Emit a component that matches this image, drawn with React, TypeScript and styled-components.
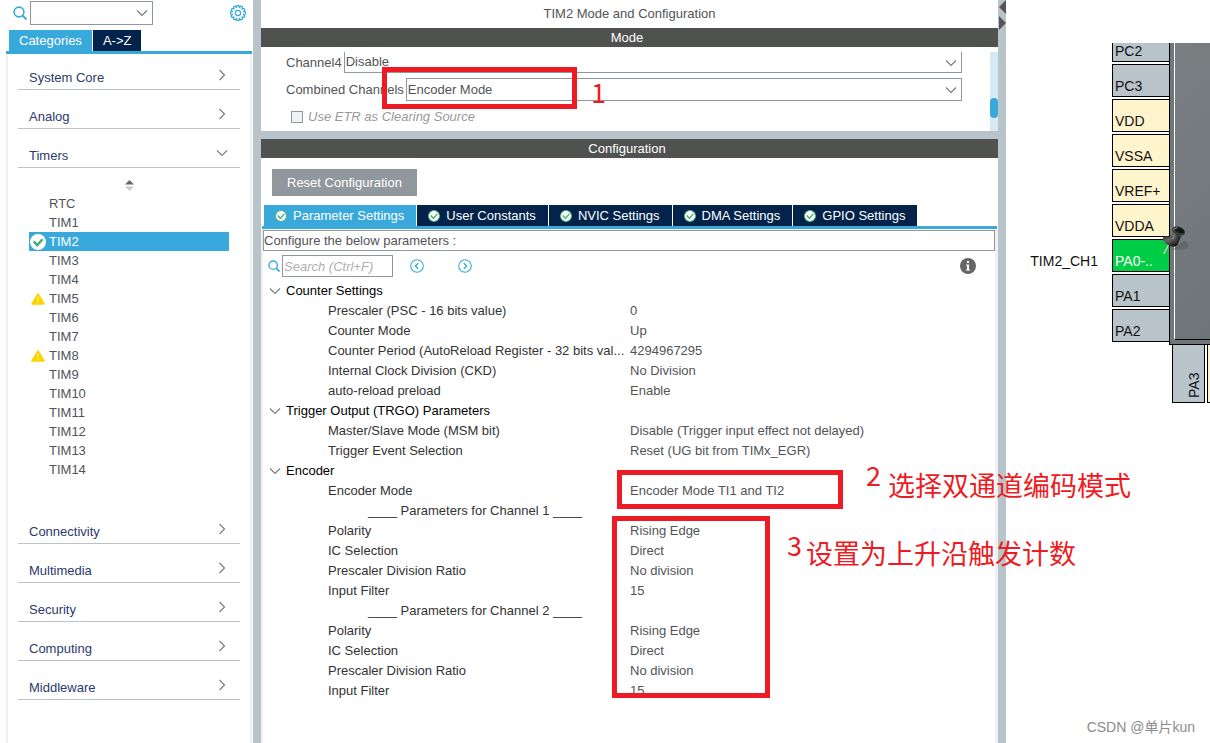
import React from "react";
import styled, { createGlobalStyle, css } from "styled-components";

const c = {
  blue: "#39a9dc",
  navy: "#03234b",
  ink: "#2b3a6b",
  text: "#525457",
  bar: "#505250",
  split: "#b9c4ca",
  line: "#8e979e",
  soft: "#f0f0f0",
  red: "#ed1c24",
  cream: "#fff5cd",
  green: "#00cd46",
};

const GlobalStyle = createGlobalStyle`
  *, *::before, *::after { box-sizing: border-box; }
  body { margin: 0; background: #fff; color: ${c.text}; }
  body, button, input, select { font-family: "Liberation Sans", Arial, sans-serif; font-size: 13px; line-height: 16px; }
  button { border: 0; padding: 0; background: none; cursor: pointer; text-align: left; }
  ul { list-style: none; margin: 0; padding: 0; }
`;

const Page = styled.div`
  position: relative;
  display: grid;
  grid-template-columns: 253px 8px minmax(0, 1fr) 8px 204px;
  min-height: 100vh;
  overflow: hidden;
`;

const Splitter = styled.div`
  background: ${c.split};
  min-height: 8px;
`;

/* ---------- icons ---------- */

const IconSvg = styled.svg`
  display: block;
  flex: none;
`;

const Chevron = ({ down = false }: { down?: boolean }) => (
  <IconSvg width="12" height="12" viewBox="0 0 12 12" fill="none" stroke="#7d7d7d" strokeWidth="1.2">
    <path d={down ? "M1 3.5 6 8.5 11 3.5" : "M3.5 1 8.5 6 3.5 11"} />
  </IconSvg>
);

const SearchIcon = ({ size }: { size: number }) => (
  <IconSvg width={size} height={size} viewBox="0 0 14 14" fill="none" stroke={c.blue} strokeWidth="1.6">
    <circle cx="6" cy="6" r="4.9" />
    <path d="m9.6 9.6 3.8 3.8" strokeWidth="2" />
  </IconSvg>
);

const gearPath = (() => {
  const teeth = 12;
  const at = (r: number, a: number) => `${(8 + r * Math.cos(a)).toFixed(2)} ${(8 + r * Math.sin(a)).toFixed(2)}`;
  let d = "";
  for (let i = 0; i < teeth; i++) {
    const a = (i / teeth) * Math.PI * 2;
    const step = (Math.PI * 2) / teeth;
    d += `${i ? "L" : "M"}${at(5.7, a - step * 0.46)} L${at(7.5, a - step * 0.26)} L${at(7.5, a + step * 0.26)} L${at(5.7, a + step * 0.46)} `;
  }
  return d + "Z";
})();

const GearIcon = () => (
  <IconSvg width="16" height="16" viewBox="0 0 16 16" fill="none" stroke={c.blue}>
    <path d={gearPath} strokeWidth="1.2" />
    <circle cx="8" cy="8" r="2.6" strokeWidth="1.2" />
  </IconSvg>
);

const CheckIcon = ({ size }: { size: number }) => (
  <IconSvg width={size} height={size} viewBox="0 0 16 16" fill="none">
    <circle cx="8" cy="8" r="7.3" fill="#fff" stroke={size < 14 ? "#55b685" : "#fff"} strokeWidth="1.4" />
    <path d="m3.8 7.4 3.4 3.8 5.2-6" stroke="#45ad72" strokeWidth={size < 14 ? 1.8 : 2.4} />
  </IconSvg>
);

const WarningIcon = () => (
  <IconSvg width="14" height="12" viewBox="0 0 14 12">
    <path d="M7 1 13 11H1Z" fill="#ffd200" stroke="#ffd200" strokeWidth="1.6" strokeLinejoin="round" />
    <path d="M7 3.5v4M7 8.8v1.3" stroke="#fff3b8" strokeWidth="1.2" />
  </IconSvg>
);

const SortIcon = () => (
  <IconSvg width="9" height="11" viewBox="0 0 9 11">
    <path d="M0 4.5 4.5 0 9 4.5Z" fill="#666" />
    <path d="M0 6.5h9L4.5 11Z" fill="#ccc" />
  </IconSvg>
);

const StepIcon = ({ next = false }: { next?: boolean }) => (
  <IconSvg width="14" height="14" viewBox="0 0 14 14" fill="none" stroke={c.blue}>
    <circle cx="7" cy="7" r="6.3" strokeWidth="1.1" />
    <path d={next ? "M5.8 4.2 8.6 7 5.8 9.8" : "M8.2 4.2 5.4 7 8.2 9.8"} strokeWidth="1.4" />
  </IconSvg>
);

const InfoIcon = () => (
  <IconSvg width="16" height="16" viewBox="0 0 16 16">
    <circle cx="8" cy="8" r="8" fill="#666" />
    <path d="M7 3h2v2H7zM6 6.4h3v5h1v1H6v-1h1v-4H6z" fill="#fff" />
  </IconSvg>
);

/* ---------- shared fields ---------- */

const SelectWrap = styled.div<{ $width?: number }>`
  position: relative;
  display: flex;
  ${(p) => (p.$width ? css`width: ${p.$width}px;` : css`flex: 1;`)}
`;

const SelectBox = styled.select<{ $height: number; $cut?: boolean }>`
  appearance: none;
  width: 100%;
  height: ${(p) => p.$height}px;
  padding: 0 24px 0 1px;
  border: 1px solid ${c.line};
  ${(p) => p.$cut && css`border-top: 0;`}
  border-radius: 0;
  background: #fff;
  color: ${c.text};
`;

const SelectArrow = styled.span`
  position: absolute;
  right: 5px;
  top: 50%;
  transform: translateY(-50%);
  pointer-events: none;
`;

type ComboProps = { id?: string; label?: string; value?: string; height: number; width?: number; cut?: boolean };
const Combo = ({ id, label, value = "", height, width, cut }: ComboProps) => (
  <SelectWrap $width={width}>
    <SelectBox id={id} aria-label={label} $height={height} $cut={cut} defaultValue={value}>
      <option value={value}>{value}</option>
    </SelectBox>
    <SelectArrow>
      <Chevron down />
    </SelectArrow>
  </SelectWrap>
);

const TabStrip = styled.div`
  display: flex;
  gap: 1px;
  border-bottom: 3px solid ${c.blue};
  padding-left: 3px;
`;

const Tab = styled.button<{ $active?: boolean }>`
  display: flex;
  align-items: center;
  gap: 6px;
  height: 21px;
  padding: 0 10px;
  white-space: nowrap;
  color: #fff;
  background: ${(p) => (p.$active ? c.blue : c.navy)};
`;

/* ---------- sidebar ---------- */

const Sidebar = styled.nav`
  display: flex;
  flex-direction: column;
  padding: 1px 1px 0 6px;
  min-height: 0;
`;

const SidebarTop = styled.div`
  display: flex;
  align-items: center;
  gap: 3px;
  padding: 0 6px 0 7px;
  margin-bottom: 5px;
`;

const GearButton = styled.button`
  margin-left: auto;
`;

const SidebarPanel = styled.div`
  flex: 1;
  display: flex;
  flex-direction: column;
  gap: 3px;
  border: solid ${c.soft};
  border-width: 0 2px;
  padding: 0 10px;
`;

const CategoryRow = styled.button`
  display: flex;
  align-items: center;
  justify-content: space-between;
  height: 36px;
  padding: 13px 12px 0 11px;
  border-bottom: 1px solid ${c.split};
  color: ${c.ink};
`;

const ArrowSlot = styled.span`
  padding-bottom: 6px;
`;

const TimerBlock = styled.div`
  display: flex;
  flex-direction: column;
  padding: 9px 11px 26px;
`;

const SortRow = styled.button`
  align-self: center;
  padding: 0 0 3px;
`;

const TimerRow = styled.button<{ $selected?: boolean }>`
  display: grid;
  grid-template-columns: 20px 1fr;
  align-items: center;
  width: 100%;
  height: 19px;
  color: ${(p) => (p.$selected ? "#fff" : c.text)};
  background: ${(p) => (p.$selected ? c.blue : "transparent")};
`;

const Slot = styled.span`
  display: flex;
  justify-content: center;
  padding-right: 3px;
`;

const timers = ["RTC", ...Array.from({ length: 14 }, (_, i) => `TIM${i + 1}`)];
const warned = ["TIM5", "TIM8"];

const Category = ({ name, open }: { name: string; open?: boolean }) => (
  <CategoryRow type="button" aria-expanded={!!open}>
    {name}
    <ArrowSlot>
      <Chevron down={open} />
    </ArrowSlot>
  </CategoryRow>
);

/* ---------- center ---------- */

const Center = styled.main`
  display: flex;
  flex-direction: column;
  min-width: 0;
  min-height: 0;
`;

const Title = styled.div`
  height: 28px;
  padding-top: 6px;
  text-align: center;
`;

const SectionBar = styled.div`
  height: 19px;
  padding: 2px 5px 0 0;
  text-align: center;
  color: #fff;
  background: ${c.bar};
`;

const ModeBody = styled.section`
  position: relative;
  display: flex;
  flex-direction: column;
  gap: 5px;
  height: 79px;
  margin-top: 5px;
  padding: 0 36px 0 25px;
`;

const FieldRow = styled.div`
  display: flex;
  align-items: center;
  gap: 2px;
`;

const CheckRow = styled.label`
  display: flex;
  align-items: center;
  gap: 5px;
  height: 22px;
  padding-left: 5px;
  font-style: italic;
  color: #999;
`;

const CheckBox = styled.input`
  appearance: none;
  width: 12px;
  height: 12px;
  margin: 0;
  border: 1px solid ${c.line};
  background: #f0f1f3;
`;

const ScrollTrack = styled.div`
  position: absolute;
  inset: 0 0 0 auto;
  width: 8px;
  padding-top: 46px;
  background: #d8e9f6;
`;

const ScrollThumb = styled.div`
  height: 20px;
  border-radius: 4px;
  background: ${c.blue};
`;

const ConfigBody = styled.section`
  flex: 1;
  display: flex;
  flex-direction: column;
  min-height: 0;
  padding-top: 11px;
`;

const ResetButton = styled.button`
  align-self: flex-start;
  height: 27px;
  margin: 0 0 9px 11px;
  padding: 0 15px;
  color: #fff;
  background: #90989e;
`;

const ConfigTabs = styled(TabStrip)`
  margin: 0 1px;
  padding-left: 2px;
`;

const ConfigTab = styled(Tab)`
  padding: 0 12px 0 11px;
`;

const ConfigPanel = styled.div`
  flex: 1;
  display: flex;
  flex-direction: column;
  min-height: 0;
  border: solid ${c.soft};
  border-width: 0 3px 0 2px;
  padding-top: 1px;
`;

const Hint = styled.div`
  height: 21px;
  padding: 2px 0 0;
  border: 1px solid ${c.line};
`;

const SearchRow = styled.div`
  display: flex;
  align-items: center;
  height: 30px;
  padding: 0 19px 0 5px;
`;

const SearchInput = styled.input`
  width: 111px;
  height: 22px;
  margin: 0 17px 0 2px;
  padding: 0 1px;
  border: 1px solid ${c.line};
  border-radius: 0;
  font-style: italic;
  &::placeholder { color: #b0b0b0; opacity: 1; }
`;

const StepButtons = styled.div`
  flex: 1;
  display: flex;
  gap: 34px;
`;

const ParamArea = styled.div`
  position: relative;
  flex: 1;
`;

const ParamTable = styled.table`
  width: 100%;
  table-layout: fixed;
  border-collapse: collapse;
  td, th { padding: 0; height: 20px; font-weight: normal; text-align: left; white-space: nowrap; }
`;

const NameCol = styled.col`
  width: 367px;
`;

const GroupButton = styled.button`
  display: flex;
  align-items: center;
  gap: 5px;
  padding-left: 6px;
  color: #000;
`;

const Name = styled.div<{ $indent: number }>`
  padding-left: ${(p) => p.$indent}px;
  color: #333;
`;

type Row = { group?: string; sub?: string; name?: string; value?: string };
const channel: Row[] = [
  { name: "Polarity", value: "Rising Edge" },
  { name: "IC Selection", value: "Direct" },
  { name: "Prescaler Division Ratio", value: "No division" },
  { name: "Input Filter", value: "15" },
];
const rows: Row[] = [
  { group: "Counter Settings" },
  { name: "Prescaler (PSC - 16 bits value)", value: "0" },
  { name: "Counter Mode", value: "Up" },
  { name: "Counter Period (AutoReload Register - 32 bits val...", value: "4294967295" },
  { name: "Internal Clock Division (CKD)", value: "No Division" },
  { name: "auto-reload preload", value: "Enable" },
  { group: "Trigger Output (TRGO) Parameters" },
  { name: "Master/Slave Mode (MSM bit)", value: "Disable (Trigger input effect not delayed)" },
  { name: "Trigger Event Selection", value: "Reset (UG bit from TIMx_EGR)" },
  { group: "Encoder" },
  { name: "Encoder Mode", value: "Encoder Mode TI1 and TI2" },
  { sub: "____ Parameters for Channel 1 ____" },
  ...channel,
  { sub: "____ Parameters for Channel 2 ____" },
  ...channel,
];

const ParamRow = ({ row }: { row: Row }) => {
  if (row.group)
    return (
      <tr>
        <th colSpan={2}>
          <GroupButton type="button" aria-expanded="true">
            <Chevron down />
            {row.group}
          </GroupButton>
        </th>
      </tr>
    );
  return (
    <tr>
      <td>
        <Name $indent={row.sub ? 105 : 65}>{row.sub ?? row.name}</Name>
      </td>
      <td>{row.value}</td>
    </tr>
  );
};

/* ---------- red notes laid over the panels ---------- */

const MarkBox = styled.div<{ $x: number; $y: number; $w: number; $h: number }>`
  position: absolute;
  z-index: 2;
  left: ${(p) => p.$x}px;
  top: ${(p) => p.$y}px;
  width: ${(p) => p.$w}px;
  height: ${(p) => p.$h}px;
  border: 5px solid ${c.red};
  pointer-events: none;
`;

const MarkText = styled.span<{ $x: number; $y: number }>`
  position: absolute;
  z-index: 2;
  left: ${(p) => p.$x}px;
  top: ${(p) => p.$y}px;
  font-family: "Noto Sans CJK SC", sans-serif;
  font-size: 27px;
  line-height: 32px;
  white-space: nowrap;
  color: ${c.red};
  pointer-events: none;
`;

/* ---------- pinout ---------- */

const Pinout = styled.aside`
  position: relative;
  padding-top: 43px;
  overflow: hidden;
  font-size: 14px;
  color: #111;
`;

const Package = styled.div`
  position: relative;
  display: grid;
  grid-template-columns: 1fr 41px;
`;

const PinColumn = styled.ul`
  display: flex;
  flex-direction: column;
  gap: 2px;
  padding-bottom: 3px;
`;

const PinRow = styled.li`
  display: grid;
  grid-template-columns: 1fr 57px;
  align-items: end;
`;

const Signal = styled.span`
  padding: 0 14px 3px 0;
  text-align: right;
`;

const pinTone = { io: c.split, power: c.cream, used: c.green };
type Tone = keyof typeof pinTone;

const Pin = styled.button<{ $tone: Tone; $cut?: boolean }>`
  display: flex;
  align-items: flex-end;
  height: ${(p) => (p.$cut ? 19 : 33)}px;
  padding: 0 0 2px 2px;
  border: 1px solid #000;
  border-right: 0;
  ${(p) => p.$cut && css`border-top: 0;`}
  font-size: 14px;
  color: ${(p) => (p.$tone === "used" ? "#fff" : "#111")};
  background: ${(p) => pinTone[p.$tone]};
`;

const Chip = styled.div`
  display: flex;
  padding: 0 0 4px 4px;
  border: solid #000;
  border-width: 0 0 1px 1px;
  background: #70777c;
`;

const ChipFace = styled.div`
  flex: 1;
  border-left: 1px solid #fff;
  border-bottom: 1px solid #000;
  background: linear-gradient(135deg, #797e81, #6e7579);
`;

const BottomPins = styled.div`
  display: flex;
  gap: 2px;
  padding-left: 166px;
`;

/* Turned half round so that the vertical text reads upwards; the top border lands at the bottom. */
const BottomPin = styled.button<{ $tone: Tone }>`
  flex: none;
  display: flex;
  align-items: flex-end;
  width: 33px;
  height: 58px;
  padding: 4px 0 0 2px;
  border: 1px solid #000;
  border-bottom: 0;
  writing-mode: vertical-rl;
  transform: rotate(180deg);
  font-size: 14px;
  color: #111;
  background: ${(p) => pinTone[p.$tone]};
`;

const PinTack = styled.svg`
  position: absolute;
  right: 18px;
  top: 182px;
`;

const Watermark = styled.span`
  position: absolute;
  right: 15px;
  bottom: 8px;
  font-family: "Liberation Sans", "Noto Sans CJK SC", sans-serif;
  font-size: 14px;
  color: #8c8c8c;
`;

const SplitArrows = styled.svg`
  display: block;
`;

const pins: { name: string; tone: Tone; signal?: string }[] = [
  { name: "PC2", tone: "io" },
  { name: "PC3", tone: "io" },
  { name: "VDD", tone: "power" },
  { name: "VSSA", tone: "power" },
  { name: "VREF+", tone: "power" },
  { name: "VDDA", tone: "power" },
  { name: "PA0-..", tone: "used", signal: "TIM2_CH1" },
  { name: "PA1", tone: "io" },
  { name: "PA2", tone: "io" },
];

const Tack = () => (
  <PinTack width="30" height="32" viewBox="0 0 30 32">
    <defs>
      <linearGradient id="skirt" x1="0" y1="0" x2="1" y2="0.4">
        <stop offset="0" stopColor="#1c1c1c" />
        <stop offset="0.45" stopColor="#6a6a6a" />
        <stop offset="1" stopColor="#151515" />
      </linearGradient>
    </defs>
    <path d="M8 25c6-1 9-7 14-9 4 0 6 4 3 7-5 3-11 1-17 2Z" fill="#565c60" opacity="0.55" />
    <path d="M6.5 20 1.8 29" stroke="#c9c9c9" strokeWidth="1.6" />
    <path d="M11 8l8 3-3.5 9-9-4Z" fill="url(#skirt)" />
    <ellipse cx="8" cy="16.5" rx="8" ry="4" transform="rotate(28 8 16.5)" fill="url(#skirt)" />
    <ellipse cx="16.5" cy="6" rx="6.8" ry="4.2" transform="rotate(22 16.5 6)" fill="#3a3a3a" />
    <ellipse cx="17.5" cy="5.2" rx="5" ry="2.4" transform="rotate(22 17.5 5.2)" fill="#161616" />
    <path d="M11.2 5.5c.6-1.7 2.2-2.6 4.3-2.6M12 10.5l-1.5 3.5" stroke="#9a9a9a" strokeWidth="1" fill="none" />
  </PinTack>
);

export default function App() {
  return (
    <>
      <GlobalStyle />
      <Page>
        <Sidebar>
          <SidebarTop>
            <SearchIcon size={14} />
            <Combo label="Search peripherals" height={24} width={123} />
            <GearButton type="button" aria-label="Settings">
              <GearIcon />
            </GearButton>
          </SidebarTop>
          <TabStrip>
            <Tab type="button" $active>Categories</Tab>
            <Tab type="button">{"A->Z"}</Tab>
          </TabStrip>
          <SidebarPanel>
            <Category name="System Core" />
            <Category name="Analog" />
            <Category name="Timers" open />
            <TimerBlock>
              <SortRow type="button" aria-label="Sort">
                <SortIcon />
              </SortRow>
              <ul>
                {timers.map((t) => (
                  <li key={t}>
                    <TimerRow type="button" $selected={t === "TIM2"}>
                      <Slot>
                        {t === "TIM2" && <CheckIcon size={16} />}
                        {warned.includes(t) && <WarningIcon />}
                      </Slot>
                      {t}
                    </TimerRow>
                  </li>
                ))}
              </ul>
            </TimerBlock>
            {["Connectivity", "Multimedia", "Security", "Computing", "Middleware"].map((n) => (
              <Category key={n} name={n} />
            ))}
          </SidebarPanel>
        </Sidebar>

        <Splitter />

        <Center>
          <Title>TIM2 Mode and Configuration</Title>
          <SectionBar>Mode</SectionBar>
          <ModeBody>
            <FieldRow>
              <label htmlFor="channel4">Channel4</label>
              <Combo id="channel4" value="Disable" height={21} cut />
            </FieldRow>
            <FieldRow>
              <label htmlFor="combined">Combined Channels</label>
              <Combo id="combined" value="Encoder Mode" height={23} />
            </FieldRow>
            <CheckRow>
              <CheckBox type="checkbox" disabled />
              Use ETR as Clearing Source
            </CheckRow>
            <ScrollTrack>
              <ScrollThumb />
            </ScrollTrack>
            <MarkBox $x={121} $y={15} $w={195} $h={42} />
            <MarkText $x={330} $y={24}>1</MarkText>
          </ModeBody>
          <Splitter />
          <SectionBar>Configuration</SectionBar>
          <ConfigBody>
            <ResetButton type="button">Reset Configuration</ResetButton>
            <ConfigTabs>
              {["Parameter Settings", "User Constants", "NVIC Settings", "DMA Settings", "GPIO Settings"].map((t, i) => (
                <ConfigTab key={t} type="button" $active={i === 0}>
                  <CheckIcon size={12} />
                  {t}
                </ConfigTab>
              ))}
            </ConfigTabs>
            <ConfigPanel>
              <Hint>Configure the below parameters :</Hint>
              <SearchRow>
                <SearchIcon size={12} />
                <SearchInput type="text" aria-label="Search parameters" placeholder="Search (Ctrl+F)" />
                <StepButtons>
                  <button type="button" aria-label="Previous match">
                    <StepIcon />
                  </button>
                  <button type="button" aria-label="Next match">
                    <StepIcon next />
                  </button>
                </StepButtons>
                <button type="button" aria-label="Information">
                  <InfoIcon />
                </button>
              </SearchRow>
              <ParamArea>
                <ParamTable>
                  <colgroup>
                    <NameCol />
                    <col />
                  </colgroup>
                  <tbody>
                    {rows.map((r, i) => (
                      <ParamRow key={i} row={r} />
                    ))}
                  </tbody>
                </ParamTable>
                <MarkBox $x={354} $y={189} $w={226} $h={39} />
                <MarkText $x={603} $y={178}>2</MarkText>
                <MarkText $x={625} $y={188}>选择双通道编码模式</MarkText>
                <MarkBox $x={349} $y={235} $w={158} $h={182} />
                <MarkText $x={524} $y={248}>3</MarkText>
                <MarkText $x={543} $y={256}>设置为上升沿触发计数</MarkText>
              </ParamArea>
            </ConfigPanel>
          </ConfigBody>
        </Center>

        <Splitter>
          <SplitArrows width="8" height="30" viewBox="0 0 8 30" fill="#555">
            <path d="M8 0v14L1 7ZM1 16l7 7-7 7Z" />
          </SplitArrows>
        </Splitter>

        <Pinout>
          <Package>
            <PinColumn>
              {pins.map((p, i) => (
                <PinRow key={p.name}>
                  <Signal>{p.signal}</Signal>
                  <Pin type="button" $tone={p.tone} $cut={i === 0}>{p.name}</Pin>
                </PinRow>
              ))}
            </PinColumn>
            <Chip>
              <ChipFace />
            </Chip>
            <Tack />
          </Package>
          <BottomPins>
            <BottomPin type="button" $tone="io">PA3</BottomPin>
            <BottomPin type="button" $tone="power" aria-label="Supply pin" />
          </BottomPins>
          <Watermark>CSDN @单片kun</Watermark>
        </Pinout>
      </Page>
    </>
  );
}
